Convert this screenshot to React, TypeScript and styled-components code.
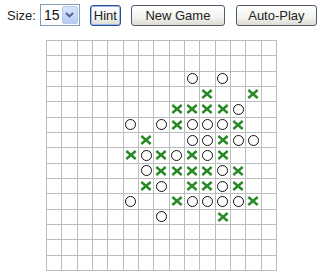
import styled, { createGlobalStyle } from "styled-components";

const GlobalStyle = createGlobalStyle`
  body {
    margin: 0;
    background: #ffffff;
    font-family: "Liberation Sans", Arial, sans-serif;
  }
`;

// '.' empty, 'x' green cross, 'o' black ring
const board = [
  "...............",
  "...............",
  ".........o.o...",
  "..........x..x.",
  "........xxxxo..",
  ".....o.oxooox..",
  "......x..ooxoo.",
  ".....xoxoxox...",
  "......oxxxxox..",
  "......xo.xxox..",
  ".....o..xoooox.",
  ".......o...x...",
  "...............",
  "...............",
  "...............",
];

export default function App() {
  return (
    <>
      <GlobalStyle />
      <Page>
        <Toolbar>
          <Label>Size:</Label>
          <SelectBox>
            <SizeSelect defaultValue="15">
              <option>10</option>
              <option>15</option>
              <option>19</option>
            </SizeSelect>
            <ArrowButton>
              <svg width="9" height="6" viewBox="0 0 9 6">
                <path d="M1 1 L4.5 4.5 L8 1" fill="none" stroke="#4d6185" strokeWidth="1.8" />
              </svg>
            </ArrowButton>
          </SelectBox>
          <Button $focused $width={31} $gap={10}>Hint</Button>
          <Button $width={94} $gap={11}>New Game</Button>
          <Button $width={81} $gap={0}>Auto-Play</Button>
        </Toolbar>
        <Board>
          {board.map((row, r) =>
            row.split("").map((c, i) => (
              <Cell key={`${r}-${i}`}>
                {c === "o" && <Ring />}
                {c === "x" && (
                  <svg width="12" height="10" viewBox="0 0 12 10">
                    <path d="M1.3 1 L10.7 9 M10.7 1 L1.3 9" stroke="#2a8a2a" strokeWidth="2.5" />
                  </svg>
                )}
              </Cell>
            ))
          )}
        </Board>
      </Page>
    </>
  );
}

const Page = styled.div`
  width: 320px;
  height: 279px;
  padding: 4px 0 0 7px;
  box-sizing: border-box;
`;

const Toolbar = styled.div`
  display: flex;
  align-items: center;
  height: 22px;
`;

const Label = styled.span`
  font-size: 13px;
  color: #222;
  margin-right: 4px;
`;

const SelectBox = styled.div`
  position: relative;
  width: 40px;
  height: 22px;
  margin-right: 10px;
`;

const SizeSelect = styled.select`
  appearance: none;
  width: 100%;
  height: 100%;
  box-sizing: border-box;
  border: 1px solid #7f9db9;
  background: #fff;
  font-family: "Liberation Sans", Arial, sans-serif;
  font-size: 14px;
  color: #111;
  padding: 0 0 0 3px;
  margin: 0;
  border-radius: 0;
  outline: none;
`;

const ArrowButton = styled.div`
  position: absolute;
  top: 2px;
  right: 2px;
  width: 16px;
  height: 18px;
  background: linear-gradient(#d8e4fd, #b8cbf5);
  border: 1px solid #b4c8f0;
  box-sizing: border-box;
  border-radius: 2px;
  display: flex;
  align-items: center;
  justify-content: center;
  pointer-events: none;
`;

const Button = styled.button<{ $focused?: boolean; $width: number; $gap: number }>`
  width: ${(p) => p.$width}px;
  height: 21px;
  margin-right: ${(p) => p.$gap}px;
  padding: 0;
  box-sizing: border-box;
  font-family: "Liberation Sans", Arial, sans-serif;
  font-size: 13px;
  color: #222;
  border: 1px solid ${(p) => (p.$focused ? "#2a4e8e" : "#4f5b6b")};
  border-radius: 3px;
  background: linear-gradient(#ffffff 0%, #f3f3ef 60%, #dcdcd4 100%);
  box-shadow: ${(p) => (p.$focused ? "inset 0 0 0 1px #9fb8ee" : "none")};
  outline: none;
`;

const Board = styled.div`
  margin: 14px 0 0 39px;
  width: 231px;
  height: 231px;
  display: grid;
  grid-template-columns: repeat(15, 1fr);
  grid-template-rows: repeat(15, 1fr);
  border-left: 1px solid #bdbdbd;
  border-top: 1px solid #bdbdbd;
  box-sizing: border-box;
`;

const Cell = styled.div`
  border-right: 1px solid #bdbdbd;
  border-bottom: 1px solid #bdbdbd;
  display: flex;
  align-items: center;
  justify-content: center;
`;

const Ring = styled.span`
  width: 9px;
  height: 9px;
  border: 1.6px solid #111;
  border-radius: 50%;
`;
